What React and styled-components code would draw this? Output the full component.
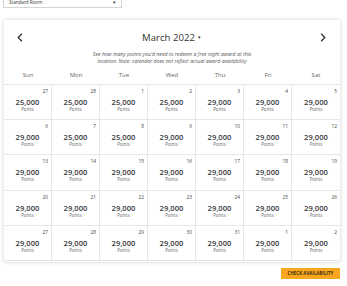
import React from 'react';
import styled, { createGlobalStyle } from 'styled-components';

const Global = createGlobalStyle`
  body {
    margin: 0;
    background: #fff;
    font-family: "Open Sans", "Liberation Sans", sans-serif;
    color: #333;
  }
`;

const Page = styled.div`
  width: 347px;
  height: 286px;
  overflow: hidden;
`;

const Select = styled.div`
  margin-left: 3px;
  width: 119px;
  height: 8px;
  border: 1px solid #d4d4d4;
  border-top: none;
  display: flex;
  justify-content: space-between;
  align-items: flex-start;
  padding: 0 5px;
  box-sizing: border-box;
  font-size: 4.6px;
  line-height: 5px;
  color: #333;
`;

const Wrap = styled.div`
  margin: 12px 0 0 4px;
  width: 336px;
  display: flex;
  flex-direction: column;
  align-items: flex-end;
`;

const Card = styled.div`
  width: 336px;
  background: #fff;
  box-shadow: 0 0 4px rgba(0, 0, 0, 0.18);
  padding-bottom: 1px;
`;

const Header = styled.div`
  height: 14px;
  margin-top: 10px;
  display: flex;
  align-items: center;
  justify-content: space-between;
  padding: 0 13px 0 12px;
`;

const Title = styled.div`
  font-size: 9.6px;
  color: #333;
  display: flex;
  align-items: center;
  gap: 3px;
  small { font-size: 5px; }
`;

const Arrow = styled.button`
  border: none;
  background: none;
  padding: 0;
  width: 8px;
  height: 10px;
  display: flex;
  align-items: center;
  justify-content: center;
`;

const Note = styled.p`
  margin: 6.5px 0 0;
  text-align: center;
  font-style: italic;
  font-size: 5.2px;
  line-height: 7px;
  color: #555;
`;

const Days = styled.div`
  display: grid;
  grid-template-columns: repeat(7, 1fr);
  margin-top: 5.5px;
  height: 10px;
  align-items: center;
  text-align: center;
  font-size: 6px;
  color: #666;
`;

const Grid = styled.div`
  margin-top: 4px;
  display: grid;
  grid-template-columns: repeat(7, 1fr);
  border-top: 1px solid #e6e6e6;
`;

const Cell = styled.div`
  height: 34.2px;
  border-right: 1px solid #e6e6e6;
  border-bottom: 1px solid #e6e6e6;
  &:nth-child(7n) { border-right: none; }
  display: flex;
  flex-direction: column;
  align-items: center;
`;

const DateNum = styled.span`
  align-self: flex-end;
  margin: 4px 3px 0 0;
  font-size: 4.8px;
  line-height: 5px;
  color: #444;
`;

const Amount = styled.span`
  margin-top: 4px;
  font-size: 7.6px;
  line-height: 8px;
  font-weight: 600;
  color: #3a3a3a;
`;

const Unit = styled.span`
  margin-top: 1px;
  font-size: 4.4px;
  line-height: 5px;
  color: #666;
`;

const CheckButton = styled.button`
  margin-top: 6px;
  width: 59px;
  height: 11px;
  border: none;
  background: #f8a61e;
  color: #3a2a10;
  font-family: inherit;
  font-size: 4.3px;
  font-weight: 700;
  letter-spacing: 0.1px;
  padding: 0;
`;

const Chevron = ({ dir }) => (
  <svg width="6" height="9" viewBox="0 0 6 9">
    <path
      d={dir === 'left' ? 'M4.8 0.8 L1.2 4.5 L4.8 8.2' : 'M1.2 0.8 L4.8 4.5 L1.2 8.2'}
      fill="none"
      stroke="#333"
      strokeWidth="1.3"
    />
  </svg>
);

const days = ['Sun', 'Mon', 'Tue', 'Wed', 'Thu', 'Fri', 'Sat'];

const a = '25,000';
const b = '29,000';
const cells = [
  [27, a], [28, a], [1, a], [2, a], [3, b], [4, b], [5, b],
  [6, b], [7, a], [8, a], [9, b], [10, b], [11, b], [12, b],
  [13, b], [14, b], [15, b], [16, b], [17, b], [18, b], [19, b],
  [20, b], [21, b], [22, b], [23, b], [24, b], [25, b], [26, b],
  [27, b], [28, b], [29, b], [30, b], [31, b], [1, b], [2, b],
];

export default function App() {
  return (
    <Page>
      <Global />
      <Select>
        <span>Standard Room</span>
        <span>▾</span>
      </Select>
      <Wrap>
        <Card>
          <Header>
            <Arrow><Chevron dir="left" /></Arrow>
            <Title>March 2022 <small>▾</small></Title>
            <Arrow><Chevron dir="right" /></Arrow>
          </Header>
          <Note>
            See how many points you'd need to redeem a free night award at this
            <br />
            location. Note: calendar does not reflect actual award availability
          </Note>
          <Days>
            {days.map(d => <span key={d}>{d}</span>)}
          </Days>
          <Grid>
            {cells.map(([n, pts], i) => (
              <Cell key={i}>
                <DateNum>{n}</DateNum>
                <Amount>{pts}</Amount>
                <Unit>Points</Unit>
              </Cell>
            ))}
          </Grid>
        </Card>
        <CheckButton>CHECK AVAILABILITY</CheckButton>
      </Wrap>
    </Page>
  );
}
